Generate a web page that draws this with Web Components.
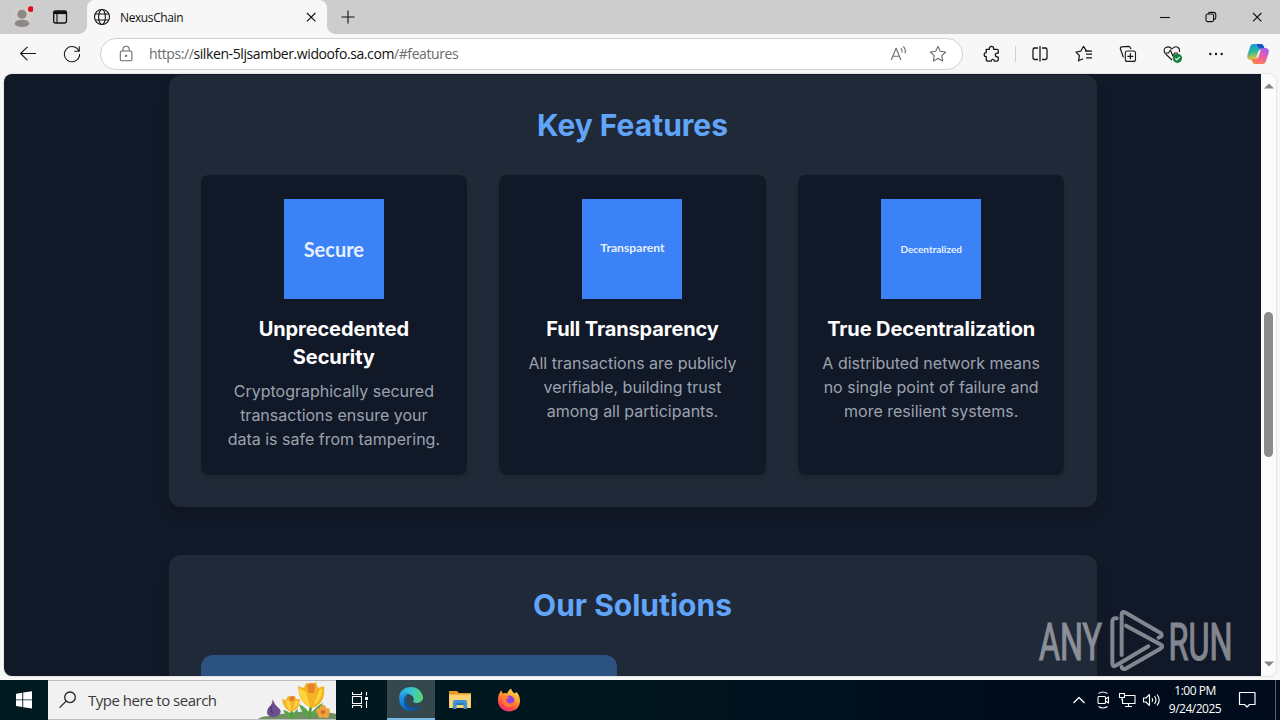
<!DOCTYPE html>
<html lang="en">
<head>
<meta charset="utf-8">
<title>NexusChain</title>
<style>
    body {
        margin: 0;
        width: 1280px;
        height: 720px;
        overflow: hidden;
        font-family: "Open Sans", "Noto Sans", sans-serif;
    }
</style>
</head>
<body>
<desktop-screen></desktop-screen>

<script>
const ICONS = {
    profile: `<circle cx="12" cy="12" r="12" fill="#d3cecb" stroke="none"/><circle cx="12" cy="9" r="5" fill="#8f8986" stroke="none"/><ellipse cx="12" cy="19" rx="8" ry="4" fill="#8f8986" stroke="none"/><circle cx="21.6" cy="3.4" r="3.2" fill="#dc0d1f" stroke="none"/>`,
    workspace: `<rect x="5.7" y="6" width="12.8" height="12" rx="2" stroke-width="1.3"/><path d="M5.5 7.6h13.2" stroke-width="3"/><path d="M9 8v10"/>`,
    globe: `<circle cx="12" cy="12" r="7.5"/><ellipse cx="12" cy="12" rx="3.4" ry="7.5"/><path d="M5.2 9h13.6M5.2 15h13.6"/>`,
    close: `<path d="M8 8l8.4 8.4M16.4 8L8 16.4"/>`,
    plus: `<path d="M12 5.5v13M5.5 12h13"/>`,
    minimize: `<path d="M7 12.5h10"/>`,
    restore: `<rect x="7" y="9" width="7.6" height="7.6" rx="1.5"/><path d="M9.3 8.8Q9.5 7.4 11 7.4H14.5Q16.8 7.4 16.8 9.8V12.6Q16.8 14.2 15 14.6"/>`,
    back: `<path d="M20 11.5H4.6M11.5 4.8L4.6 11.5l6.9 6.9"/>`,
    refresh: `<path d="M19 9.2A7.6 7.6 0 1 0 19.6 12M19.3 4.3v5h-5"/>`,
    lock: `<rect x="6.3" y="9" width="11.6" height="9.8" rx="1.5"/><path d="M9 9V7.3a3.1 3.1 0 0 1 6.2 0V9"/><circle cx="12.1" cy="13.9" r=".6" fill="currentColor"/>`,
    read: `<path d="M5.200 18L10.100 6.200 14.900 18M6.800 14.200h6.600M14.900 6.200q1.600 1.800 1.100 4.300M17.200 4.300q3.200 3.200 1.700 7"/>`,
    star: `<path d="M12 4.4l2.3 4.9 5.4.7-3.9 3.7.9 5.3L12 16.4 7.3 19l.9-5.3L4.3 10l5.4-.7z"/>`,
    puzzle: `<path d="M7.200 7.300H10.400Q10 4.300 12.500 4.300T14.600 7.300H18Q19.300 7.300 19.300 8.700V11Q16.300 10.900 16.300 13T19.300 15.200V17.600Q19.300 19.200 17.700 19.200H15.400Q15.400 17.300 13.800 17.300T12.200 19.200H9Q7.300 19.200 7.300 17.500V14.700Q5.200 14.600 5.200 12.700T7.300 10.700Z" stroke-width="1.3"/>`,
    split: `<path d="M10 6H6.8Q5 6 5 7.800V15.500Q5 17.500 6.800 17.500H10M14 6H17.300Q19 6 19 7.800V15.500Q19 17.500 17.300 17.500H14M12 4v15.500" stroke-width="1.3"/>`,
    favorites: `<path d="M18.8 9.2L14.3 8.7 11.5 4.3 8.7 9.2 4 10 7.4 13.6 6.5 18.8 11.2 16.7M14 12.2H20M13 9.2H20M14 15.8H20" stroke-width="1.25"/>`,
    collections: `<rect x="9.3" y="9" width="10.2" height="10.4" rx="2"/><path d="M14.4 11.3v6M11.4 14.3h6M7.4 15.4L4.4 6.8Q4 5.3 5.4 4.9L12.6 4.3Q14 4.4 14.5 6L15 7" stroke-width="1.25"/>`,
    heart: `<path d="M12 18L5.6 12M4.5 10.5Q3.4 7 6 5.4 9.3 3.8 12 7 14.7 3.8 17.8 5.2 20.2 6.9 19.4 10M4 11H8.5L10.4 8 12.8 14 14.6 11H18"/><circle cx="17.4" cy="16.3" r="4.6" fill="#15803d" stroke="none"/><path d="M15.2 16.3l1.6 1.5 2.9-2.9" stroke="#fff"/>`,
    dots: `<g fill="currentColor" stroke="none"><circle cx="6.3" cy="12" r="1.2"/><circle cx="12" cy="12" r="1.2"/><circle cx="17.7" cy="12" r="1.2"/></g>`,
    copilot: `<defs>
        <linearGradient id="a" x1="0" y1="0" x2=".2" y2="1"><stop offset="0" stop-color="#1597e8"/><stop offset=".5" stop-color="#27b5a0"/><stop offset="1" stop-color="#f3c52b"/></linearGradient>
        <linearGradient id="b" x1=".8" y1="0" x2=".3" y2="1"><stop offset="0" stop-color="#9b62ef"/><stop offset=".5" stop-color="#ed5ca4"/><stop offset="1" stop-color="#ff8144"/></linearGradient></defs>
        <g stroke="none"><path d="M7 2H15.5Q17 2 17.8 4.5L18.7 7H15.6Q13.2 7 12.3 9.7L10.4 15.6Q9.5 18 7.3 18H4Q.3 17 1.4 13L4.2 4.4Q5 2 7 2Z" fill="url(#a)"/><path d="M10 2H15.5Q17 2 17.8 4.5L18.7 7H15Q12.5 7 11.6 4.2Q11 2 10 2Z" fill="#1756c4"/>
        <path d="M17 22H8.9Q7 22 6.2 19.5L5.3 17H8.6Q10.8 17 11.7 14.3L13.6 8.4Q14.4 6 16.7 6H20Q23.7 7 22.6 11L19.8 19.6Q19 22 17 22Z" fill="url(#b)"/><path d="M10.9 15.9L12.7 10Q13.4 7.8 14.8 7.2L12.8 14.2Q12 16.5 10.2 17Z" fill="#f7f7f7"/></g>`,
    windows: `<g fill="#fff" stroke="none"><path d="M4 5.7l6.3-1v6.7H4zM11.2 4.6L20 3.2v8.2h-8.8zM4 12.2h6.3v6.7l-6.3-1zM11.2 12.2H20v8.3l-8.8-1.3z"/></g>`,
    search: `<circle cx="15" cy="9.300" r="5.300" stroke-width="1.3"/><path d="M11.200 13.100L4.600 19.600" stroke-width="1.3"/>`,
    taskview: `<path d="M4.5 4v2.500h9V4M4.5 20v-2.500h9V20M4.5 8.500h9v7h-9zM18.500 4v3.500M18.500 13v7"/><rect x="17" y="9" width="3" height="3" fill="#fff" stroke="none"/>`,
    edge: `<defs>
        <linearGradient id="e1" x1="0" y1=".3" x2="1" y2=".3"><stop offset="0" stop-color="#2aa5e4"/><stop offset=".5" stop-color="#35c5d5"/><stop offset="1" stop-color="#5ada62"/></linearGradient>
        <linearGradient id="e2" x1="0" y1="0" x2=".3" y2="1"><stop offset="0" stop-color="#25a2e8"/><stop offset="1" stop-color="#0a63be"/></linearGradient></defs>
        <g stroke="none"><path d="M.3 9C2-2 21-4 24 10 24.5 15.5 16.4 17.8 14 14.6 16.6 11 12.5 6.8 8 7 4.4 7 1.700 8.400.3 11Z" fill="url(#e1)"/>
        <path d="M.2 12C.4 6.5 5.5 5.7 9.1 6.7 5.8 9.6 6.4 15.6 9.4 18.6 12 22.7 17 21 21.6 18.8 15.500 27.600.2 25 .2 12Z" fill="url(#e2)"/>
        <path d="M9.1 6.7C4 12 8.4 20.3 15 20.6 18 20.7 20 19.7 21.8 18.6 18.6 24 9.8 26 6.3 19.6 3.3 13.2 5.6 8.2 9.1 6.7Z" fill="#14519b"/></g>`,
    folder: `<g stroke="none"><path d="M1 3h8l2 2h12v15H1z" fill="#e29a24"/><path d="M1 6.500h22V20H1z" fill="#f8d273"/><path d="M5 14q0-2 2-2h10q2 0 2 2v7h-3.500v-4h-7v4H5z" fill="#3c92d2"/><path d="M8.500 15h7v2h-7z" fill="#2875b6"/></g>`,
    firefox: `<defs><linearGradient id="f" x1=".8" y1="0" x2=".3" y2="1"><stop offset="0" stop-color="#ffe64c"/><stop offset=".4" stop-color="#ffa02c"/><stop offset=".75" stop-color="#ff4d43"/><stop offset="1" stop-color="#e72b7b"/></linearGradient></defs>
        <g stroke="none"><path d="M1 13C.7 9 1.7 6.5 3 4.6L4 2.300 5.700 5.400Q8 4.600 10 5.400 11 2.800 14 .6 14.400 3.500 17.500 5.600L19.500 4Q23.300 8 23 13.500C22.600 20 17.600 23.400 12 23.400 5.500 23.400 1.200 18.600 1 13Z" fill="url(#f)"/><circle cx="12.400" cy="12.500" r="5" fill="#8b42e5"/><path d="M4.800 8.400Q8.600 6.400 12.400 9.400 10.800 10.400 9.600 11.200 8.600 14.200 12 15.500 15.200 16 17.200 13.200 17.600 18.700 12.200 18.900 6.400 18.700 5.600 12.900Z" fill="#ff7a35"/></g>`,
    flowers: `<g stroke="none"><path d="M0 40Q4 35.500 15 36 34 31 58 31.500 72 32 79 34V40Z" fill="#6f9160"/>
        <path d="M35 39Q34 33 35 29M53 39Q52 33 54 27" fill="none" stroke="#4b9840" stroke-width="2.500"/>
        <path d="M26 30Q33 31 35 37 37 31 41 29 41 37 35 38 29 37 26 30ZM42 24Q51 28 53 36 57 27 66 23 63 36 53 37 45 36 42 24Z" fill="#5ba348"/>
        <path d="M15.500 19Q17 24 21 27.500 26 31 22 35 16 39.500 11 35 8.500 31 12 27 16 24 15.500 19Z" fill="#6d4f91"/><path d="M15.500 24q-1 6 1 10-6-2-1-10z" fill="#503a75"/>
        <path d="M25 19L29 20 31 16 35 17 38 16 39 19 43 19Q43 30 34 32 26 29 25 19Z" fill="#f3b52a"/><path d="M29 20l4 2 1 9q-5-4-5-11zM39 20l-3 10 6-8z" fill="#ffd545"/><circle cx="35" cy="18.500" r="2.500" fill="#e5782b"/>
        <path d="M41 6L47 8 49 3 54 4 59 2 61 8 67 6Q69 24 55 28 42 24 41 6Z" fill="#f4b321"/><path d="M42 8l7 4 4 15Q42 20 42 8zM63 9l-7 17q10-7 9-17z" fill="#ffd640"/><path d="M50 5q5-4 8 0l-1 8h-5z" fill="#e5822b"/>
        <g fill="#eda43e"><circle cx="66" cy="28" r="3"/><circle cx="62" cy="31" r="3"/><circle cx="70" cy="31" r="3"/><circle cx="64" cy="35" r="3"/><circle cx="69" cy="35" r="3"/></g><circle cx="66" cy="32" r="2.200" fill="#d96a35"/></g>`,
    chevron: `<path d="M6.500 15L12 9.500l5.500 5.500" stroke-width="1.300"/>`,
    meet: `<rect x="7" y="8.500" width="7.500" height="7" rx="1"/><path d="M14.500 11l3-2v6l-3-2M7.500 5.500q4.500-3 9 0M7.500 18.500q4.500 3 9 0"/>`,
    network: `<path d="M9.500 7.500H20V15.500H7.500V11M13.500 15.500v3M10 18.500h7M4.500 5.500h5v4h-5zM7 9.500v3"/>`,
    volume: `<path d="M4.500 10H7L10.500 6.500v11L7 14H4.500zM13 10q1.500 2 0 4M15.500 8q3 4 0 8M18 6.500q4.500 5.500 0 11"/>`,
    notice: `<path d="M4.500 4.500h15.500v12h-5.500l-2.500 2.500-2.500-2.500h-5z" stroke-width="1.200"/>`,
    up: `<path d="M7 14.500h10L12 9.500z" fill="#858585" stroke="none"/>`,
    down: `<path d="M7 9.500h10L12 14.500z" fill="#858585" stroke="none"/>`
};

class UiIcon extends HTMLElement {
    connectedCallback() {
        const w = this.getAttribute('w') || 24;
        const h = this.getAttribute('h') || 24;
        const box = this.getAttribute('box') || '0 0 24 24';
        this.attachShadow({ mode: 'open' }).innerHTML = `
            <style>
                :host { display: block; flex: none; width: ${w}px; height: ${h}px; }
                svg { display: block; fill: none; stroke: currentColor; stroke-width: 1.1; stroke-linejoin: round; }
            </style>
            <svg width="${w}" height="${h}" viewBox="${box}">${ICONS[this.getAttribute('name')]}</svg>
        `;
    }
}

class TabStrip extends HTMLElement {
    connectedCallback() {
        this.attachShadow({ mode: 'open' }).innerHTML = `
            <style>
                :host { display: flex; align-items: center; height: 34px; background: #cdcdcd; color: #111; padding-left: 11px; }
                .work { margin: 0 15px 0 15px; }
                .tab {
                    display: flex;
                    align-items: center;
                    width: 240px;
                    height: 34px;
                    background: #f7f7f7;
                    border-radius: 8px 8px 0 0;
                    box-sizing: border-box;
                    padding: 0 4px 0 3px;
                }
                .flare { width: 8px; height: 8px; align-self: flex-end; }
                .left { background: radial-gradient(circle at 0 0, transparent 7.5px, #f7f7f7 8px); margin-left: -8px; }
                .right { background: radial-gradient(circle at 100% 0, transparent 7.5px, #f7f7f7 8px); margin-right: 1px; }
                .title { flex: 1; font-size: 12px; margin-left: 6px; letter-spacing: -0.4px; }
                .controls { display: flex; gap: 22px; margin-left: auto; padding-right: 11px; }
            </style>
            <ui-icon name="profile" w="22" h="22"></ui-icon>
            <ui-icon class="work" name="workspace"></ui-icon>
            <span class="flare left"></span>
            <div class="tab">
                <ui-icon name="globe"></ui-icon>
                <span class="title">NexusChain</span>
                <ui-icon name="close"></ui-icon>
            </div>
            <span class="flare right"></span>
            <ui-icon name="plus"></ui-icon>
            <div class="controls">
                <ui-icon name="minimize"></ui-icon>
                <ui-icon name="restore"></ui-icon>
                <ui-icon name="close"></ui-icon>
            </div>
        `;
    }
}

class AddressBar extends HTMLElement {
    connectedCallback() {
        this.attachShadow({ mode: 'open' }).innerHTML = `
            <style>
                :host { display: flex; align-items: center; height: 40px; background: #f7f7f7; color: #191919; padding: 0 10px 0 16px; }
                .refresh { margin: 0 16px 0 20px; }
                .pill {
                    display: flex;
                    align-items: center;
                    width: 863px;
                    height: 32px;
                    box-sizing: border-box;
                    border: 1px solid #d2d2d2;
                    border-radius: 16px;
                    background: #fff;
                    padding: 0 12px 0 13px;
                    color: #6b6b6b;
                }
                .url { flex: 1; font-size: 14px; line-height: 18px; margin: -1px 0 0 11px; letter-spacing: -0.41px; white-space: nowrap; }
                .url b { font-weight: 400; color: #111; }
                .star { margin-left: 16px; }
                .tools { display: flex; align-items: center; gap: 20px; margin-left: 16px; }
                .line { width: 1px; height: 16px; background: #cfcfcf; margin: 0 -8px; }
                .copilot { margin-left: auto; }
            </style>
            <ui-icon name="back"></ui-icon>
            <ui-icon class="refresh" name="refresh"></ui-icon>
            <div class="pill">
                <ui-icon name="lock"></ui-icon>
                <span class="url">https://<b>silken-5ljsamber.widoofo.sa.com</b>/#features</span>
                <ui-icon name="read"></ui-icon>
                <ui-icon class="star" name="star"></ui-icon>
            </div>
            <div class="tools">
                <ui-icon name="puzzle"></ui-icon>
                <span class="line"></span>
                <ui-icon name="split"></ui-icon>
                <ui-icon name="favorites"></ui-icon>
                <ui-icon name="collections"></ui-icon>
                <ui-icon name="heart"></ui-icon>
                <ui-icon name="dots"></ui-icon>
            </div>
            <ui-icon class="copilot" name="copilot"></ui-icon>
        `;
    }
}

class FeatureCard extends HTMLElement {
    connectedCallback() {
        this.attachShadow({ mode: 'open' }).innerHTML = `
            <style>
                :host {
                    display: flex;
                    flex-direction: column;
                    align-items: center;
                    padding: 24px;
                    border-radius: 8px;
                    background: #111827;
                    box-shadow: 0 4px 6px -1px rgba(0, 0, 0, 0.1), 0 2px 4px -2px rgba(0, 0, 0, 0.1);
                    text-align: center;
                }
                .tile {
                    display: flex;
                    align-items: center;
                    justify-content: center;
                    width: 100px;
                    height: 100px;
                    box-sizing: border-box;
                    padding-bottom: ${this.getAttribute('lift') || 1}px;
                    margin-bottom: 16px;
                    background: #3b82f6;
                    color: #e6f0fe;
                    font-family: Lato, sans-serif;
                    font-weight: 700;
                }
                h3 { margin: 0 0 8px; font-size: 20px; line-height: 28px; font-weight: 700; letter-spacing: -0.1px; color: #fff; }
                p { margin: 0; font-size: 16px; line-height: 24px; color: #9ca3af; }
            </style>
            <div class="tile" style="font-size: ${this.getAttribute('size')}px">${this.getAttribute('label')}</div>
            <h3>${this.getAttribute('heading')}</h3>
            <p><slot></slot></p>
        `;
    }
}

class PageSection extends HTMLElement {
    connectedCallback() {
        this.attachShadow({ mode: 'open' }).innerHTML = `
            <style>
                :host {
                    display: block;
                    width: 928px;
                    flex: none;
                    box-sizing: border-box;
                    padding: 32px;
                    border-radius: 12px;
                    background: #202937;
                    box-shadow: 0 10px 15px -3px rgba(0, 0, 0, 0.1), 0 4px 6px -4px rgba(0, 0, 0, 0.1);
                }
                h2 { margin: 0 0 32px; font-size: 30px; line-height: 36px; font-weight: 700; color: #60a5fa; text-align: center; }
                .grid { display: grid; grid-template-columns: repeat(${this.getAttribute('columns')}, 1fr); gap: 32px; }
            </style>
            <h2>${this.getAttribute('heading')}</h2>
            <div class="grid"><slot></slot></div>
        `;
    }
}

class NexusPage extends HTMLElement {
    connectedCallback() {
        this.attachShadow({ mode: 'open' }).innerHTML = `
            <style>
                :host {
                    display: flex;
                    flex-direction: column;
                    align-items: center;
                    gap: 48px;
                    width: 1257px;
                    overflow: hidden;
                    box-sizing: border-box;
                    padding-top: 1px;
                    background: #111827;
                    font-family: Inter, sans-serif;
                }
                .solution { height: 240px; border-radius: 12px; background: #2c5282; }
            </style>
            <page-section heading="Key Features" columns="3">
                <feature-card label="Secure" size="20" heading="Unprecedented Security">Cryptographically secured transactions ensure your data is safe from tampering.</feature-card>
                <feature-card label="Transparent" size="12.2" lift="4" heading="Full Transparency">All transactions are publicly verifiable, building trust among all participants.</feature-card>
                <feature-card label="Decentralized" size="10" heading="True Decentralization">A distributed network means no single point of failure and more resilient systems.</feature-card>
            </page-section>
            <page-section heading="Our Solutions" columns="2">
                <div class="solution"></div>
            </page-section>
        `;
    }
}

class ScrollTrack extends HTMLElement {
    connectedCallback() {
        this.attachShadow({ mode: 'open' }).innerHTML = `
            <style>
                :host { display: flex; flex-direction: column; align-items: center; width: 15px; background: #fcfcfc; }
                .thumb { width: 9px; height: 145px; margin-top: 214px; border-radius: 5px; background: #8b8b8b; }
                .down { margin-top: auto; }
            </style>
            <ui-icon name="up"></ui-icon>
            <div class="thumb"></div>
            <ui-icon class="down" name="down"></ui-icon>
        `;
    }
}

class AnyrunMark extends HTMLElement {
    connectedCallback() {
        this.attachShadow({ mode: 'open' }).innerHTML = `
            <style>
                :host { display: block; }
                svg { display: block; overflow: visible; }
                text { font-family: Roboto, sans-serif; font-size: 52px; fill: #fff; stroke: #fff; stroke-width: 1.2px; }
            </style>
            <svg width="235" height="75" viewBox="1035 605 235 75" opacity="0.48">
                <text x="1039" y="659.5" textLength="63" lengthAdjust="spacingAndGlyphs">ANY</text>
                <text x="1168.500" y="659.5" textLength="64" lengthAdjust="spacingAndGlyphs">RUN</text>
                <g transform="translate(1105 605) scale(.3333)" fill="none" stroke="#fff" stroke-width="12" stroke-linecap="round" stroke-linejoin="round">
                    <path d="M35 40Q22 38 22 50V175Q22 188 34 181L130 124"/>
                    <path d="M50 150V30Q50 16 62 23L168 85Q176 94 161 98"/>
                    <path d="M63 62L168 119Q176 125 166 131L64 190Q50 196 50 185"/>
                </g>
            </svg>
        `;
    }
}

class TaskBar extends HTMLElement {
    connectedCallback() {
        this.attachShadow({ mode: 'open' }).innerHTML = `
            <style>
                :host {
                    display: flex;
                    height: 40px;
                    background: linear-gradient(90deg, #001a20, #00161f 45%, #000c1b 80%);
                    color: #fff;
                }
                .cell { display: flex; align-items: center; justify-content: center; width: 48px; height: 40px; }
                .search {
                    display: flex;
                    align-items: center;
                    width: 288px;
                    box-sizing: border-box;
                    padding-left: 7px;
                    background: #f1f1f1;
                    border: 1px solid #bdbdbd;
                    border-width: 1px 0;
                    color: #222;
                }
                .search span { flex: 1; margin-left: 9px; font-size: 15px; letter-spacing: -0.5px; color: #3a3a3a; }
                .view { width: 51px; box-sizing: border-box; padding-right: 3px; }
                .active { box-sizing: border-box; background: #35484e; border-bottom: 2px solid #7ab8e6; }
                .folder { margin-left: 1px; }
                .firefox { margin-left: 1px; }
                .tray { display: flex; align-items: center; margin-left: auto; }
                .clock { width: 64px; font-size: 12px; line-height: 18px; text-align: center; letter-spacing: -0.5px; }
                .notice { margin: 0 16px 0 8px; }
                .edge { align-self: stretch; width: 5px; border-left: 1px solid #56606a; box-sizing: border-box; }
            </style>
            <div class="cell"><ui-icon name="windows"></ui-icon></div>
            <div class="search">
                <ui-icon name="search"></ui-icon>
                <span>Type here to search</span>
                <ui-icon name="flowers" w="79" h="38" box="0 1 79 38"></ui-icon>
            </div>
            <div class="cell view"><ui-icon name="taskview"></ui-icon></div>
            <div class="cell active"><ui-icon name="edge"></ui-icon></div>
            <div class="cell folder"><ui-icon name="folder"></ui-icon></div>
            <div class="cell firefox"><ui-icon name="firefox"></ui-icon></div>
            <div class="tray">
                <ui-icon name="chevron"></ui-icon>
                <ui-icon name="meet"></ui-icon>
                <ui-icon name="network"></ui-icon>
                <ui-icon name="volume"></ui-icon>
                <div class="clock">1:00 PM<br>9/24/2025</div>
                <ui-icon class="notice" name="notice"></ui-icon>
                <span class="edge"></span>
            </div>
        `;
    }
}

class DesktopScreen extends HTMLElement {
    connectedCallback() {
        this.attachShadow({ mode: 'open' }).innerHTML = `
            <style>
                :host { display: flex; flex-direction: column; width: 1280px; height: 720px; background: #f7f7f7; }
                .view { display: flex; height: 602px; margin: 0 4px 4px; border-radius: 8px; overflow: hidden; box-shadow: 0 0 2px rgba(0, 0, 0, 0.25); }
                anyrun-mark { position: absolute; left: 1035px; top: 605px; }
            </style>
            <tab-strip></tab-strip>
            <address-bar></address-bar>
            <div class="view">
                <nexus-page></nexus-page>
                <scroll-track></scroll-track>
            </div>
            <task-bar></task-bar>
            <anyrun-mark></anyrun-mark>
        `;
    }
}

customElements.define('ui-icon', UiIcon);
customElements.define('tab-strip', TabStrip);
customElements.define('address-bar', AddressBar);
customElements.define('feature-card', FeatureCard);
customElements.define('page-section', PageSection);
customElements.define('nexus-page', NexusPage);
customElements.define('scroll-track', ScrollTrack);
customElements.define('anyrun-mark', AnyrunMark);
customElements.define('task-bar', TaskBar);
customElements.define('desktop-screen', DesktopScreen);
</script>
</body>
</html>
